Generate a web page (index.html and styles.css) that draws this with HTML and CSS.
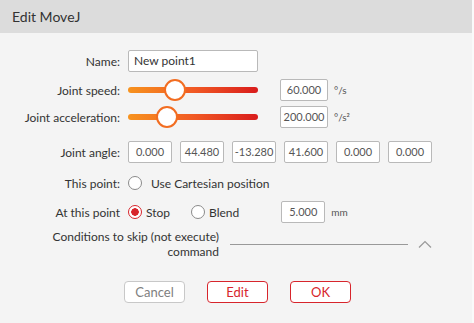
FILE: index.html
```html
<!DOCTYPE html>
<html lang="en">
<head>
    <meta charset="UTF-8">
    <title>Edit MoveJ</title>
    <link rel="stylesheet" href="styles.css">
</head>
<body>
    <div class="dialog">
        <div class="header">Edit MoveJ</div>

        <div class="row row-name">
            <label class="label">Name:</label>
            <div class="field name-field">New point1</div>
        </div>

        <div class="row row-speed">
            <label class="label">Joint speed:</label>
            <div class="slider"><div class="track"></div><div class="thumb" style="left: 36px"></div></div>
            <div class="field value-field">60.000</div>
            <span class="unit">°/s</span>
        </div>

        <div class="row row-accel">
            <label class="label">Joint acceleration:</label>
            <div class="slider"><div class="track"></div><div class="thumb" style="left: 28px"></div></div>
            <div class="field value-field">200.000</div>
            <span class="unit">°/s²</span>
        </div>

        <div class="row row-angle">
            <label class="label">Joint angle:</label>
            <div class="angles">
                <div class="field angle-field">0.000</div>
                <div class="field angle-field">44.480</div>
                <div class="field angle-field">-13.280</div>
                <div class="field angle-field">41.600</div>
                <div class="field angle-field">0.000</div>
                <div class="field angle-field">0.000</div>
            </div>
        </div>

        <div class="row row-point">
            <label class="label">This point:</label>
            <span class="radio"></span>
            <span class="option">Use Cartesian position</span>
        </div>

        <div class="row row-at">
            <label class="label">At this point</label>
            <span class="radio checked"></span>
            <span class="option tight">Stop</span>
            <span class="radio second"></span>
            <span class="option tight">Blend</span>
            <div class="field blend-field">5.000</div>
            <span class="unit">mm</span>
        </div>

        <div class="row row-skip">
            <div class="skip-label">Conditions to skip (not execute)<br>command</div>
            <div class="skip-line"></div>
            <svg class="chevron" width="14" height="8" viewBox="0 0 14 8">
                <path d="M1 7.5 L7 1.5 L13 7.5" fill="none" stroke="#999" stroke-width="1.2"/>
            </svg>
        </div>

        <div class="buttons">
            <button class="btn btn-cancel">Cancel</button>
            <button class="btn btn-red">Edit</button>
            <button class="btn btn-red">OK</button>
        </div>
    </div>
</body>
</html>
```

FILE: styles.css
```css
body {
    margin: 0;
    background: #f4f4f4;
    font-family: 'Lato', 'Noto Sans', sans-serif;
    font-size: 12px;
    color: #333;
}
.dialog {
    height: 323px;
    border-right: 2px solid #fafafa;
}
.header {
    height: 33px;
    line-height: 33px;
    padding-left: 12px;
    background: #dcdcdc;
    font-size: 14px;
    color: #333;
}
.row {
    display: flex;
    align-items: center;
    height: 22px;
}
.label {
    width: 128px;
    padding-right: 8px;
    text-align: right;
    box-sizing: border-box;
    flex-shrink: 0;
}
.row-name { margin-top: 17px; }
.row-speed { margin-top: 7px; }
.row-accel { margin-top: 5px; }
.row-angle { margin-top: 13px; }
.row-point { margin-top: 9px; }
.row-at { margin-top: 7px; }
.row-skip { margin-top: 6px; height: 30px; }

.field {
    box-sizing: border-box;
    height: 22px;
    line-height: 20px;
    background: #fff;
    border: 1px solid #b9b9b9;
    border-radius: 2px;
    font-size: 11px;
    color: #555;
    text-align: center;
}
.name-field {
    width: 130px;
    text-align: left;
    padding-left: 5px;
    font-size: 12px;
    color: #333;
}
.slider {
    position: relative;
    width: 130px;
    height: 22px;
}
.track {
    position: absolute;
    left: 0;
    right: 0;
    top: 8px;
    height: 6px;
    border-radius: 3px;
    background: linear-gradient(90deg, #f7931e, #f15a24 50%, #d91c1c);
}
.thumb {
    position: absolute;
    top: 0;
    width: 22px;
    height: 22px;
    box-sizing: border-box;
    border: 2px solid #f26d21;
    border-radius: 50%;
    background: #fff;
}
.value-field {
    width: 48px;
    margin-left: 22px;
}
.unit {
    margin-left: 6px;
    font-size: 10px;
    color: #555;
}
.angles {
    display: flex;
    gap: 8px;
}
.angle-field {
    width: 44px;
}
.radio {
    box-sizing: border-box;
    width: 14px;
    height: 14px;
    border: 1.5px solid #8a8a8a;
    border-radius: 50%;
    background: #fff;
}
.radio.checked {
    border-color: #d7252c;
    background: radial-gradient(circle, #d7252c 0 3.5px, #fff 4px);
}
.radio.second {
    margin-left: 21px;
}
.option {
    margin-left: 9px;
}
.option.tight {
    margin-left: 4px;
}
.blend-field {
    width: 44px;
    margin-left: 42px;
}
.skip-label {
    width: 219px;
    text-align: right;
    line-height: 15px;
    flex-shrink: 0;
}
.skip-line {
    width: 178px;
    height: 1px;
    margin-left: 11px;
    background: #999;
}
.chevron {
    margin-left: 10px;
}
.buttons {
    display: flex;
    gap: 22px;
    margin-top: 22px;
    padding-left: 124px;
}
.btn {
    width: 61px;
    height: 22px;
    padding: 0;
    background: #fff;
    border-radius: 4px;
    font-family: inherit;
    font-size: 13px;
}
.btn-cancel {
    border: 1px solid #c8c8c8;
    color: #808080;
}
.btn-red {
    border: 1px solid #d7252c;
    color: #d7252c;
}
```
